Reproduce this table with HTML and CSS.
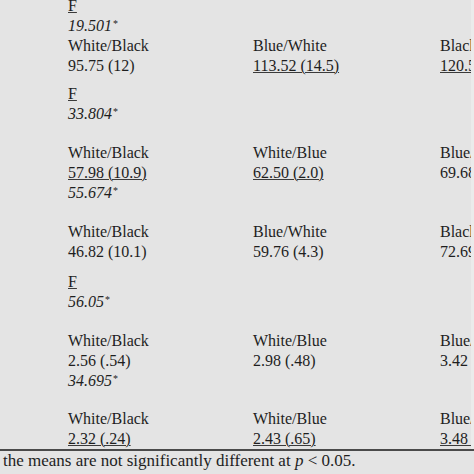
FILE: index.html
```html
<!DOCTYPE html>
<html lang="en">
<head>
<meta charset="utf-8">
<title>Table</title>
<link rel="stylesheet" href="styles.css">
</head>
<body>
<div class="frame">
  <div class="table">
    <div class="row first">
      <div class="cell"><div><span class="u">F</span></div><div class="i">19.501<span class="ast">*</span></div></div>
    </div>
    <div class="row">
      <div class="cell"><div>White/Black</div><div>95.75 (12)</div></div>
      <div class="cell"><div>Blue/White</div><div><span class="u">113.52 (14.5)</span></div></div>
      <div class="cell"><div>Black/</div><div><span class="u">120.5</span></div></div>
    </div>
    <div class="row gap-s">
      <div class="cell"><div><span class="u">F</span></div><div class="i">33.804<span class="ast">*</span></div></div>
    </div>
    <div class="row gap-l">
      <div class="cell"><div>White/Black</div><div><span class="u">57.98 (10.9)</span></div><div class="i">55.674<span class="ast">*</span></div></div>
      <div class="cell"><div>White/Blue</div><div><span class="u">62.50 (2.0)</span></div></div>
      <div class="cell"><div>Blue/</div><div>69.68</div></div>
    </div>
    <div class="row gap-l">
      <div class="cell"><div>White/Black</div><div>46.82 (10.1)</div></div>
      <div class="cell"><div>Blue/White</div><div>59.76 (4.3)</div></div>
      <div class="cell"><div>Black/</div><div>72.69</div></div>
    </div>
    <div class="row gap-m">
      <div class="cell"><div><span class="u">F</span></div><div class="i">56.05<span class="ast">*</span></div></div>
    </div>
    <div class="row gap-l">
      <div class="cell"><div>White/Black</div><div>2.56 (.54)</div><div class="i">34.695<span class="ast">*</span></div></div>
      <div class="cell"><div>White/Blue</div><div>2.98 (.48)</div></div>
      <div class="cell"><div>Blue/</div><div>3.42</div></div>
    </div>
    <div class="row gap-k">
      <div class="cell"><div>White/Black</div><div><span class="u">2.32 (.24)</span></div></div>
      <div class="cell"><div>White/Blue</div><div><span class="u">2.43 (.65)</span></div></div>
      <div class="cell"><div>Blue/</div><div><span class="u pre">3.48    </span></div></div>
    </div>
  </div>
  <div class="rule"></div>
  <p class="note">the means are not significantly different at <span class="i">p</span> &lt; 0.05.</p>
</div>
</body>
</html>
```

FILE: styles.css
```css
html, body {
  margin: 0;
  padding: 0;
}

body {
  width: 474px;
  height: 474px;
  overflow: hidden;
  background: #e4e4e4;
  color: #1e1e1e;
  font-family: "Liberation Serif", "Times New Roman", serif;
  font-size: 16px;
  line-height: 20px;
}

.frame {
  background: #ebebeb;
}

.table {
  width: 471px;
  box-sizing: border-box;
  padding-left: 68px;
  overflow: hidden;
  background: #e4e4e4;
}

.row {
  display: grid;
  grid-template-columns: 185px 187px 1fr;
  white-space: nowrap;
}

.row.first { margin-top: -4px; }
.row.gap-s { margin-top: 8px; }
.row.gap-m { margin-top: 10px; }
.row.gap-l { margin-top: 19px; }
.row.gap-k { margin-top: 18px; }

.i {
  font-style: italic;
}

.u {
  text-decoration: underline;
  text-decoration-thickness: 1px;
  text-decoration-color: #3a3a3a;
}

.pre {
  white-space: pre;
}

.ast {
  font-style: normal;
  font-size: 10px;
  line-height: 0;
  vertical-align: 4px;
  margin-left: 1px;
}

.rule {
  height: 2px;
  background: #4a4a4a;
}

.note {
  margin: 0;
  padding-left: 3px;
  font-size: 17px;
  line-height: 20px;
  background: #e4e4e4;
  white-space: nowrap;
}
```
